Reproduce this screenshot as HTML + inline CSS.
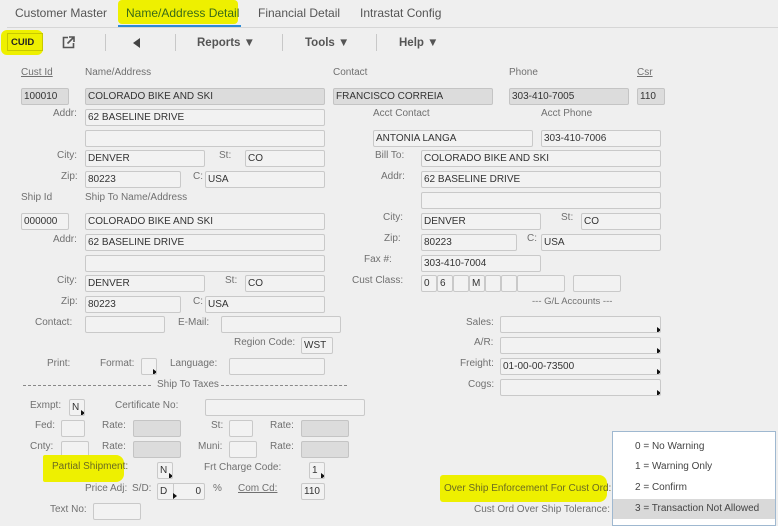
<!DOCTYPE html>
<html><head><meta charset="utf-8"><style>
*{margin:0;padding:0;box-sizing:border-box}
body{width:778px;height:522px;overflow:hidden;background:#efefef;font-family:"Liberation Sans",Arial,sans-serif;font-size:10px;color:#6e6e6e;position:relative}
.a{position:absolute;white-space:nowrap}
.l{position:absolute;white-space:nowrap;color:#707070;font-size:10px;line-height:12px}
.b{position:absolute;border:1px solid #c9c9c9;border-radius:2px;background:#f2f2f2;color:#333;font-size:10px;padding-left:2px;line-height:15px;white-space:nowrap;overflow:hidden}
.g{background:#dcdcdc;border-color:#c4c4c4}
.d::after{content:"";position:absolute;right:-1px;bottom:-1px;border-left:4px solid #111;border-top:3px solid transparent;border-bottom:3px solid transparent}
.u{text-decoration:underline}
.hl{position:absolute;background:#eef000;border-radius:4px}
.sep{position:absolute;top:34px;width:1px;height:17px;background:#c8c8c8}
.tb{position:absolute;top:37px;font-weight:bold;color:#555;font-size:11.5px}
.tab{position:absolute;top:6px;font-size:12px;color:#555}
.dash{position:absolute;top:385px;height:0;border-top:1px dashed #888}
</style></head><body>
<div class="hl" style="left:118px;top:0;width:120px;height:24px"></div>
<div class="tab" style="left:15px">Customer Master</div>
<div class="tab" style="left:126px;color:#3a6b18">Name/Address Detail</div>
<div class="tab" style="left:258px">Financial Detail</div>
<div class="tab" style="left:360px">Intrastat Config</div>
<div class="a" style="left:7px;top:27px;width:771px;height:1px;background:#d6d6d6"></div>
<div class="a" style="left:118px;top:25px;width:123px;height:2px;background:#2c8ad6"></div>

<div class="hl" style="left:1px;top:30px;width:42px;height:25px;border-radius:6px"></div>
<div class="a" style="left:7px;top:33px;width:36px;height:18px;border:1px solid #c8c800;font-weight:bold;font-size:9.5px;color:#222;padding:3px 0 0 3px">CUID</div>
<svg class="a" style="left:62px;top:36px" width="13" height="13" viewBox="0 0 13 13"><path d="M6 1.5H1.5v10h10V7" fill="none" stroke="#555" stroke-width="1.6"/><path d="M7 1h5v5M12 1L5.5 7.5" fill="none" stroke="#555" stroke-width="1.6"/></svg>
<div class="sep" style="left:105px"></div>
<div class="a" style="left:133px;top:38px;border-right:7px solid #444;border-top:5px solid transparent;border-bottom:5px solid transparent"></div>
<div class="sep" style="left:175px"></div>
<div class="tb" style="left:197px">Reports ▼</div>
<div class="sep" style="left:282px"></div>
<div class="tb" style="left:305px">Tools ▼</div>
<div class="sep" style="left:376px"></div>
<div class="tb" style="left:399px">Help ▼</div>

<div class="l u" style="left:21px;top:67px">Cust Id</div>
<div class="l" style="left:85px;top:67px">Name/Address</div>
<div class="l" style="left:333px;top:67px">Contact</div>
<div class="l" style="left:509px;top:67px">Phone</div>
<div class="l u" style="left:637px;top:67px">Csr</div>
<div class="b g" style="left:21px;top:88px;width:48px;height:17px">100010</div>
<div class="b g" style="left:85px;top:88px;width:240px;height:17px">COLORADO BIKE AND SKI</div>
<div class="b g" style="left:333px;top:88px;width:160px;height:17px">FRANCISCO CORREIA</div>
<div class="b g" style="left:509px;top:88px;width:120px;height:17px">303-410-7005</div>
<div class="b g" style="left:637px;top:88px;width:28px;height:17px">110</div>

<div class="l" style="left:53px;top:108px">Addr:</div>
<div class="b" style="left:85px;top:109px;width:240px;height:17px">62 BASELINE DRIVE</div>
<div class="l" style="left:373px;top:108px">Acct Contact</div>
<div class="l" style="left:541px;top:108px">Acct Phone</div>
<div class="b" style="left:85px;top:130px;width:240px;height:17px"></div>
<div class="b" style="left:373px;top:130px;width:160px;height:17px">ANTONIA LANGA</div>
<div class="b" style="left:541px;top:130px;width:120px;height:17px">303-410-7006</div>

<div class="l" style="left:57px;top:150px">City:</div>
<div class="b" style="left:85px;top:150px;width:120px;height:17px">DENVER</div>
<div class="l" style="left:219px;top:150px">St:</div>
<div class="b" style="left:245px;top:150px;width:80px;height:17px">CO</div>
<div class="l" style="left:375px;top:150px">Bill To:</div>
<div class="b" style="left:421px;top:150px;width:240px;height:17px">COLORADO BIKE AND SKI</div>

<div class="l" style="left:61px;top:171px">Zip:</div>
<div class="b" style="left:85px;top:171px;width:96px;height:17px">80223</div>
<div class="l" style="left:193px;top:171px">C:</div>
<div class="b" style="left:205px;top:171px;width:120px;height:17px">USA</div>
<div class="l" style="left:381px;top:171px">Addr:</div>
<div class="b" style="left:421px;top:171px;width:240px;height:17px">62 BASELINE DRIVE</div>

<div class="l" style="left:21px;top:192px">Ship Id</div>
<div class="l" style="left:85px;top:192px">Ship To Name/Address</div>
<div class="b" style="left:421px;top:192px;width:240px;height:17px"></div>

<div class="b" style="left:21px;top:213px;width:48px;height:17px">000000</div>
<div class="b" style="left:85px;top:213px;width:240px;height:17px">COLORADO BIKE AND SKI</div>
<div class="l" style="left:383px;top:212px">City:</div>
<div class="b" style="left:421px;top:213px;width:120px;height:17px">DENVER</div>
<div class="l" style="left:561px;top:212px">St:</div>
<div class="b" style="left:581px;top:213px;width:80px;height:17px">CO</div>

<div class="l" style="left:53px;top:234px">Addr:</div>
<div class="b" style="left:85px;top:234px;width:240px;height:17px">62 BASELINE DRIVE</div>
<div class="l" style="left:384px;top:233px">Zip:</div>
<div class="b" style="left:421px;top:234px;width:96px;height:17px">80223</div>
<div class="l" style="left:527px;top:233px">C:</div>
<div class="b" style="left:541px;top:234px;width:120px;height:17px">USA</div>

<div class="b" style="left:85px;top:255px;width:240px;height:17px"></div>
<div class="l" style="left:364px;top:254px">Fax #:</div>
<div class="b" style="left:421px;top:255px;width:120px;height:17px">303-410-7004</div>

<div class="l" style="left:57px;top:275px">City:</div>
<div class="b" style="left:85px;top:275px;width:120px;height:17px">DENVER</div>
<div class="l" style="left:225px;top:275px">St:</div>
<div class="b" style="left:245px;top:275px;width:80px;height:17px">CO</div>
<div class="l" style="left:352px;top:275px">Cust Class:</div>
<div class="b" style="left:421px;top:275px;width:16px;height:17px">0</div>
<div class="b" style="left:437px;top:275px;width:16px;height:17px">6</div>
<div class="b" style="left:453px;top:275px;width:16px;height:17px"></div>
<div class="b" style="left:469px;top:275px;width:16px;height:17px">M</div>
<div class="b" style="left:485px;top:275px;width:16px;height:17px"></div>
<div class="b" style="left:501px;top:275px;width:16px;height:17px"></div>
<div class="b" style="left:517px;top:275px;width:48px;height:17px"></div>
<div class="b" style="left:573px;top:275px;width:48px;height:17px"></div>

<div class="l" style="left:61px;top:296px">Zip:</div>
<div class="b" style="left:85px;top:296px;width:96px;height:17px">80223</div>
<div class="l" style="left:193px;top:296px">C:</div>
<div class="b" style="left:205px;top:296px;width:120px;height:17px">USA</div>
<div class="l" style="left:532px;top:296px;font-size:9.5px">--- G/L Accounts ---</div>

<div class="l" style="left:35px;top:317px">Contact:</div>
<div class="b" style="left:85px;top:316px;width:80px;height:17px"></div>
<div class="l" style="left:178px;top:317px">E-Mail:</div>
<div class="b" style="left:221px;top:316px;width:120px;height:17px"></div>
<div class="l" style="left:466px;top:317px">Sales:</div>
<div class="b d" style="left:500px;top:316px;width:161px;height:17px"></div>

<div class="l" style="left:234px;top:337px">Region Code:</div>
<div class="b" style="left:301px;top:337px;width:32px;height:17px">WST</div>
<div class="l" style="left:474px;top:337px">A/R:</div>
<div class="b d" style="left:500px;top:337px;width:161px;height:17px"></div>

<div class="l" style="left:47px;top:358px">Print:</div>
<div class="l" style="left:100px;top:358px">Format:</div>
<div class="b d" style="left:141px;top:358px;width:16px;height:17px"></div>
<div class="l" style="left:170px;top:358px">Language:</div>
<div class="b" style="left:229px;top:358px;width:96px;height:17px"></div>
<div class="l" style="left:460px;top:358px">Freight:</div>
<div class="b d" style="left:500px;top:358px;width:161px;height:17px">01-00-00-73500</div>

<div class="dash" style="left:23px;width:128px"></div>
<div class="l" style="left:157px;top:379px">Ship To Taxes</div>
<div class="dash" style="left:221px;width:126px"></div>
<div class="l" style="left:468px;top:379px">Cogs:</div>
<div class="b d" style="left:500px;top:379px;width:161px;height:17px"></div>

<div class="l" style="left:30px;top:400px">Exmpt:</div>
<div class="b d" style="left:69px;top:399px;width:16px;height:17px">N</div>
<div class="l" style="left:115px;top:400px">Certificate No:</div>
<div class="b" style="left:205px;top:399px;width:160px;height:17px"></div>

<div class="l" style="left:35px;top:420px">Fed:</div>
<div class="b" style="left:61px;top:420px;width:24px;height:17px"></div>
<div class="l" style="left:102px;top:420px">Rate:</div>
<div class="b g" style="left:133px;top:420px;width:48px;height:17px"></div>
<div class="l" style="left:211px;top:420px">St:</div>
<div class="b" style="left:229px;top:420px;width:24px;height:17px"></div>
<div class="l" style="left:270px;top:420px">Rate:</div>
<div class="b g" style="left:301px;top:420px;width:48px;height:17px"></div>

<div class="l" style="left:30px;top:441px">Cnty:</div>
<div class="b" style="left:61px;top:441px;width:28px;height:17px"></div>
<div class="l" style="left:102px;top:441px">Rate:</div>
<div class="b g" style="left:133px;top:441px;width:48px;height:17px"></div>
<div class="l" style="left:198px;top:441px">Muni:</div>
<div class="b" style="left:229px;top:441px;width:28px;height:17px"></div>
<div class="l" style="left:270px;top:441px">Rate:</div>
<div class="b g" style="left:301px;top:441px;width:48px;height:17px"></div>

<div class="hl" style="left:43px;top:455px;width:81px;height:27px;border-radius:2px 8px 8px 2px"></div>
<div class="l" style="left:52px;top:461px;color:#6b6b20">Partial Shipment:</div>
<div class="b d" style="left:157px;top:462px;width:16px;height:17px">N</div>
<div class="l" style="left:204px;top:462px">Frt Charge Code:</div>
<div class="b d" style="left:309px;top:462px;width:16px;height:17px">1</div>

<div class="l" style="left:85px;top:483px">Price Adj:</div>
<div class="l" style="left:132px;top:483px">S/D:</div>
<div class="b" style="left:157px;top:483px;width:48px;height:17px">D<span style="position:absolute;left:15px;top:0;width:1px;height:15px;background:#c9c9c9"></span><span style="position:absolute;right:3px">0</span><span style="position:absolute;left:15px;bottom:0;border-left:4px solid #111;border-top:3px solid transparent;border-bottom:3px solid transparent"></span></div>
<div class="l" style="left:213px;top:483px">%</div>
<div class="l u" style="left:238px;top:483px">Com Cd:</div>
<div class="b" style="left:301px;top:483px;width:24px;height:17px">110</div>

<div class="l" style="left:50px;top:504px">Text No:</div>
<div class="b" style="left:93px;top:503px;width:48px;height:17px"></div>

<div class="hl" style="left:440px;top:475px;width:167px;height:27px;border-radius:3px 8px 8px 3px"></div>
<div class="l" style="left:444px;top:483px;color:#6b6b20">Over Ship Enforcement For Cust Ord:</div>
<div class="l" style="left:474px;top:504px">Cust Ord Over Ship Tolerance:</div>

<div class="a" style="left:612px;top:431px;width:164px;height:95px;background:#fff;border:1px solid #9fb8d0;color:#444">
<div class="a" style="left:0;top:0;width:162px;height:25px"><span class="a" style="left:22px;top:9px">0 = No Warning</span></div>
<div class="a" style="left:0;top:25px;width:162px;height:21px"><span class="a" style="left:22px;top:4px">1 = Warning Only</span></div>
<div class="a" style="left:0;top:46px;width:162px;height:20px"><span class="a" style="left:22px;top:4px">2 = Confirm</span></div>
<div class="a" style="left:0;top:67px;width:162px;height:20px;background:#d9d9d9"><span class="a" style="left:22px;top:4px">3 = Transaction Not Allowed</span></div>
</div>
</body></html>
